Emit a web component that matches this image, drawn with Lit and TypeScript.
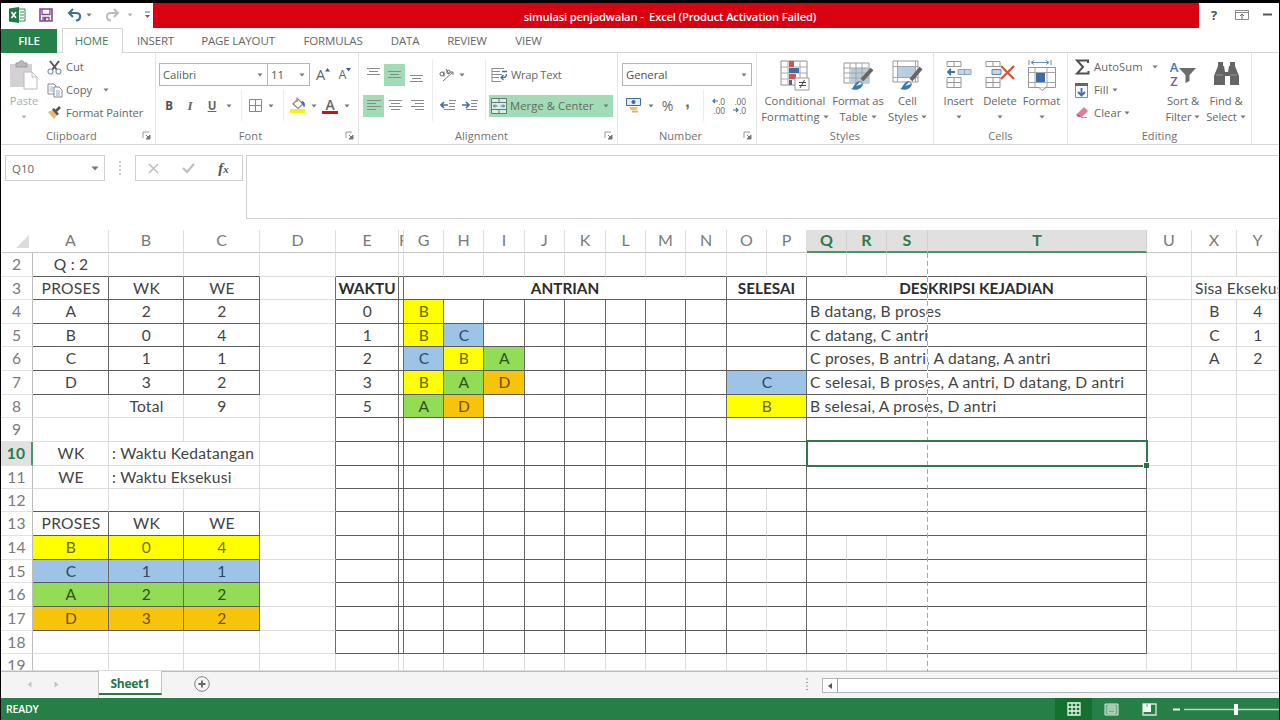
import { LitElement, html, svg, css, nothing } from "lit";
import { customElement } from "lit/decorators.js";
import { classMap } from "lit/directives/class-map.js";
import { styleMap } from "lit/directives/style-map.js";

type Tone = "yellow" | "blue" | "green" | "orange";
interface Cell {
  text?: string;
  span?: number;
  tone?: Tone;
  bold?: boolean;
  left?: boolean;
}

const COLS = ["A", "B", "C", "D", "E", "F", "G", "H", "I", "J", "K", "L", "M", "N", "O", "P", "Q", "R", "S", "T", "U", "X", "Y"];
const COL_WIDTHS = [76, 75, 76, 76, 63, 5, 40, 40, 41, 40, 41, 40, 40, 41, 40, 40, 40, 40, 41, 219, 45, 45, 42];
const ROW_HEIGHTS = [24, 23, 24, 23, 24, 24, 23, 24, 24, 23, 23, 24, 24, 23, 24, 24, 23, 17];
const TONE_OF: Record<string, Tone> = { B: "yellow", C: "blue", A: "green", D: "orange" };

const cells: Record<string, Cell> = {
  A2: { text: "Q : 2" },
  A3: { text: "PROSES" }, B3: { text: "WK" }, C3: { text: "WE" },
  A4: { text: "A" }, B4: { text: "2" }, C4: { text: "2" },
  A5: { text: "B" }, B5: { text: "0" }, C5: { text: "4" },
  A6: { text: "C" }, B6: { text: "1" }, C6: { text: "1" },
  A7: { text: "D" }, B7: { text: "3" }, C7: { text: "2" },
  B8: { text: "Total" }, C8: { text: "9" },
  A10: { text: "WK" }, B10: { text: ": Waktu Kedatangan", span: 2, left: true },
  A11: { text: "WE" }, B11: { text: ": Waktu Eksekusi", span: 2, left: true },
  A13: { text: "PROSES" }, B13: { text: "WK" }, C13: { text: "WE" },
  E3: { text: "WAKTU", bold: true },
  G3: { text: "ANTRIAN", bold: true, span: 8 },
  O3: { text: "SELESAI", bold: true, span: 2 },
  Q3: { text: "DESKRIPSI KEJADIAN", bold: true, span: 4 },
  E4: { text: "0" }, E5: { text: "1" }, E6: { text: "2" }, E7: { text: "3" }, E8: { text: "5" },
  O7: { text: "C", tone: "blue" }, O8: { text: "B", tone: "yellow" },
  Q4: { text: "B datang, B proses" },
  Q5: { text: "C datang, C antri" },
  Q6: { text: "C proses, B antri, A datang, A antri" },
  Q7: { text: "C selesai, B proses, A antri, D datang, D antri" },
  Q8: { text: "B selesai, A proses, D antri" },
  X3: { text: "Sisa Eksekusi", span: 2, left: true },
  X4: { text: "B" }, Y4: { text: "4" },
  X5: { text: "C" }, Y5: { text: "1" },
  X6: { text: "A" }, Y6: { text: "2" },
};
[["B", "0", "4"], ["C", "1", "1"], ["A", "2", "2"], ["D", "3", "2"]].forEach((r, i) =>
  r.forEach((text, c) => (cells["ABC"[c] + (14 + i)] = { text, tone: TONE_OF[r[0]] })));
["B", "BC", "CBA", "BAD", "AD"].forEach((queue, i) =>
  [...queue].forEach((text, c) => (cells["GHI"[c] + (4 + i)] = { text, tone: TONE_OF[text] })));
for (let r = 4; r <= 11; r++) cells["O" + r] = { ...cells["O" + r], span: 2 };
for (let r = 4; r <= 13; r++) cells["Q" + r] = { ...cells["Q" + r], span: 4, left: true };

const between = (v: number, a: number, b: number) => v >= a && v <= b;

@customElement("sheet-grid")
export class SheetGrid extends LitElement {
  static styles = css`
    :host { display: block; font-family: Lato, "Noto Sans", sans-serif; color: #444; }
    .grid { display: grid; height: 441px; overflow: hidden; background: #fff; }
    .corner { display: flex; justify-content: flex-end; align-items: flex-end; padding: 0 4px 4px 0; border-bottom: 1px solid #c6c6c6; }
    .head, .row { display: flex; align-items: center; justify-content: center; box-sizing: border-box; color: #7a7a7a; font-size: 16px; overflow: hidden; }
    .head { border-right: 1px solid #dedede; border-bottom: 1px solid #c6c6c6; padding: 0 0 3px 0; line-height: 19px; }
    .row { border-right: 1px solid #bdbdbd; border-bottom: 1px solid #e2e2e2; letter-spacing: .2px; align-items: flex-start; line-height: 23px; font-size: 15.6px; }
    .head.on { background: #e0e0e0; color: #2c7c4a; font-weight: 700; border-right-color: #cfcfcf; border-bottom: 2px solid #4e9468; padding-bottom: 2px; }
    .row.on { background: #e1e1e1; color: #2c7c4a; font-weight: 700; border-right: 2px solid #4e9468; }
    .head.narrow { justify-content: flex-start; padding-left: 0; }
    .cell { box-sizing: border-box; min-width: 0; overflow: hidden; white-space: nowrap; text-align: center; font-size: 15.6px; line-height: 23px; letter-spacing: .24px; border-right: 1px solid #dcdcdc; border-bottom: 1px solid #dcdcdc; padding-left: 1px; }
    .left { text-align: left; padding-left: 3px; }
    .bold { font-weight: 700; color: #2c2c2c; letter-spacing: 0; font-size: 15.3px; line-height: 22px; padding-left: 0; }
    .dr { border-right-color: #6a6a6a; }
    .db { border-bottom-color: #5c5c5c; }
    .yellow { background: #ff0; color: #6a6a10; }
    .blue { background: #9dc3e6; color: #2f4a63; }
    .green { background: #92dc56; color: #2e5218; }
    .orange { background: #f6c40b; color: #70500c; }
    .pagebreak { grid-row: 2 / -1; grid-column: 20; justify-self: end; width: 1px; background: repeating-linear-gradient(#a8a8a8 0 5px, #fff 5px 8px); }
    .selection { grid-row: 10; grid-column: 18 / 22; box-sizing: border-box; border: 2px solid #33784c; margin: -2px -1px -1px -1px; display: flex; justify-content: flex-end; align-items: flex-end; z-index: 1; }
    .handle { width: 5px; height: 5px; margin: 0 -3px -3px 0; flex: none; background: #2b7145; border: 1px solid #fff; border-right: 0; border-bottom: 0; }
  `;

  private cellsOf(r: number) {
    const out = [];
    for (let c = 0; c < COLS.length; ) {
      const cell = cells[COLS[c] + r] ?? {};
      const span = cell.span ?? 1;
      const last = c + span - 1;
      const tableRows = between(r, 3, 7) || between(r, 13, 17);
      const dr = (last <= 2 && tableRows) || (between(last, 3, 13) && between(r, 3, 18)) || ((last === 15 || last === 19) && between(r, 3, 18));
      const db = (c <= 2 && (between(r, 2, 7) || between(r, 12, 17))) || (between(c, 4, 19) && between(r, 2, 18));
      out.push(html`<div
        class=${classMap({ cell: true, left: !!cell.left, bold: !!cell.bold, dr, db, [cell.tone ?? "plain"]: true })}
        style=${styleMap({ gridRow: String(r), gridColumn: `${c + 2} / span ${span}` })}>${cell.text ?? nothing}</div>`);
      c += span;
    }
    return out;
  }

  render() {
    const tracks = {
      gridTemplateColumns: [32, ...COL_WIDTHS].map((w) => w + "px").join(" "),
      gridTemplateRows: [23, ...ROW_HEIGHTS].map((h) => h + "px").join(" "),
    };
    return html`<div class="grid" style=${styleMap(tracks)}>
      <div class="corner"><svg width="13" height="13"><path d="M13 0V13H0Z" fill="#dcdcdc" /></svg></div>
      ${COLS.map((c, i) => html`<div class=${classMap({ head: true, on: between(i, 16, 19), narrow: c === "F" })}>${c}</div>`)}
      ${ROW_HEIGHTS.map((_, i) => html`<div class=${classMap({ row: true, on: i === 8 })} style=${styleMap({ gridRow: String(i + 2), gridColumn: "1" })}>${i + 2}</div>
        ${this.cellsOf(i + 2)}`)}
      <div class="pagebreak"></div>
      <div class="selection"><span class="handle"></span></div>
    </div>`;
  }
}

const icon = (w: number, h: number, body: unknown) => html`<svg width=${w} height=${h} viewBox="0 0 ${w} ${h}" fill="none">${body}</svg>`;
const caret = icon(6, 4, svg`<path d="M0.500 0.500H5.500L3 3.500Z" fill="#777"/>`);
const paleCaret = icon(6, 4, svg`<path d="M0.500 0.500H5.500L3 3.500Z" fill="#b5b5b5"/>`);
const launcher = icon(9, 9, svg`<path d="M1 7V1H7" stroke="#999"/><path d="M4 4L7 7M8 4V8H4Z" stroke="#777" fill="#777"/>`);
const lines = (rows: number[][]) => svg`${rows.map(([x, y, w]) => svg`<path d="M${x} ${y + 0.5}h${w}" stroke="#8a8a8a"/>`)}`;

const I = {
  excel: icon(17, 16, svg`<path d="M9 2h7v12H9z" fill="#fff" stroke="#3a8a58"/><path d="M11 5h4M11 8h4M11 11h4" stroke="#3a8a58"/><path d="M0 1.500L10 0V16L0 14.500Z" fill="#1f7a43"/><path d="M2.500 5L7 11M7 5L2.500 11" stroke="#fff" stroke-width="1.600"/>`),
  save: icon(14, 14, svg`<path d="M1 1H13V13H1Z" stroke="#80479b" stroke-width="1.600"/><path d="M3 1V6.500H11V1M4 13V9.500H10V13" stroke="#80479b" stroke-width="1.300"/><path d="M5 10h2v3H5z" fill="#80479b"/>`),
  undo: icon(15, 14, svg`<path d="M6 1L2 5L6 9M2 5H9C15 5 14 12 9 12.500" stroke="#3c6ea5" stroke-width="2.100"/>`),
  redo: icon(15, 14, svg`<path d="M9 1L13 5L9 9M13 5H6C0 5 1 12 6 12.500" stroke="#bcbcbc" stroke-width="2"/>`),
  custom: icon(7, 8, svg`<path d="M1 1h5" stroke="#666"/><path d="M1 4h5L3.500 7Z" fill="#666"/>`),
  ribbonOpt: icon(14, 12, svg`<path d="M.500 1.500h13v9H.500zM.500 3.500h13" stroke="#888"/><path d="M7 10V5M5 7L7 5L9 7" stroke="#666"/>`),
  paste: icon(30, 31, svg`<path d="M1 4h22v23H1z" fill="#d5d0d6"/><path d="M7 5V3h3c0-3 5-3 5 0h3v4H7z" fill="#b9b9b9" stroke="#999"/><path d="M15 12h8l5 5v12H15z" fill="#fdfdfd" stroke="#bcbcbc"/><path d="M23 12v5h5" stroke="#bcbcbc"/>`),
  cut: icon(15, 15, svg`<path d="M3 1L10 10M12 1L5 10" stroke="#555" stroke-width="2"/><circle cx="3.500" cy="11.500" r="2.500" stroke="#7e97c0" stroke-width="1.200"/><circle cx="11.500" cy="11.500" r="2.500" stroke="#7e97c0" stroke-width="1.200"/>`),
  copy: icon(16, 15, svg`<path d="M1 1h6l2 2v8H1z" fill="#fff" stroke="#888"/><path d="M2.500 4h4M2.500 6h4M2.500 8h4" stroke="#9bb3cd"/><path d="M7 4h5l3 3v7H7z" fill="#fff" stroke="#888"/><path d="M9 8h4M9 10h4M9 12h4" stroke="#8ba8c7"/>`),
  brush: icon(15, 14, svg`<path d="M1 6l5-2 4 5-3 4z" fill="#e9b96b"/><path d="M5 3.500l2-1.500 5 6-2 1.500z" fill="#555"/><path d="M9 5l4-4" stroke="#555" stroke-width="2.600"/>`),
  borders: icon(14, 13, svg`<path d="M1.500 .500h12v12h-12zM7.500 .500v12M1.500 6.500h12" stroke="#888"/>`),
  bucket: icon(18, 17, svg`<path d="M1 12h15v4H1z" fill="#f7f01a"/><path d="M4 7l5-5 5 5-5 4.500zM8 5V0.500" stroke="#888" stroke-width="1.200" fill="#fff"/><path d="M13 4c4 1 3 5 2 7-1-3-1-4-3-5z" fill="#3d6da5"/>`),
  top: icon(15, 14, lines([[1, 0, 13], [3, 3, 9], [1, 6, 13]])),
  mid: icon(15, 14, lines([[1, 3, 13], [3, 6, 9], [1, 9, 13]])),
  bot: icon(15, 14, lines([[1, 7, 13], [3, 10, 9], [1, 13, 13]])),
  al: icon(15, 13, lines([[1, 1, 14], [1, 4, 9], [1, 7, 14], [1, 10, 9]])),
  ac: icon(15, 13, lines([[1, 1, 13], [3, 4, 9], [1, 7, 13], [3, 10, 9]])),
  ar: icon(15, 13, lines([[1, 1, 13], [5, 4, 9], [1, 7, 13], [5, 10, 9]])),
  orient: icon(17, 16, svg`<circle cx="4" cy="7" r="2" stroke="#666"/><path d="M6 4.500v5M8 2l3 5" stroke="#666"/><circle cx="10.500" cy="5" r="1.700" stroke="#666"/><path d="M5 14L15 5M12 5h3v3" stroke="#777"/>`),
  outdent: icon(17, 13, svg`${lines([[9, 1, 7], [9, 4, 6], [9, 7, 6], [4, 10, 11]])}<path d="M8 6H1M4 3L1 6L4 9" stroke="#3e6fa8" stroke-width="1.600"/>`),
  indent: icon(17, 13, svg`${lines([[9, 1, 7], [9, 4, 6], [9, 7, 6], [4, 10, 11]])}<path d="M0 6H7M4 3L7 6L4 9" stroke="#3e6fa8" stroke-width="1.600"/>`),
  wrap: icon(17, 16, svg`<path d="M1 1.500h12M1 4.500h8M1 7.500h10M1 10.500h7M1 14.500h9M1 1v14" stroke="#8c8c8c"/><path d="M11 4.500h5M15.500 7c0 3-1 3.500-5 3.500M12.500 8L10 10.500L12.500 13" stroke="#3e6fa8" stroke-width="1.300"/>`),
  merge: icon(16, 16, svg`<path d="M.500 .500h15v15H.500zM.500 4.500h15M.500 11.500h15M8 .500v4M8 11.500v4" stroke="#5f7f70" fill="#d8efe1"/><path d="M2.500 8h4M13.500 8h-4M4 6.500L2.500 8L4 9.500M12 6.500L13.500 8L12 9.500" stroke="#3e6fa8"/>`),
  money: icon(17, 17, svg`<path d="M1.500 1.500h14v7h-14z" fill="#e6edf5" stroke="#41689a"/><circle cx="8.500" cy="5" r="2" fill="#41689a"/><path d="M4 10h9l-2 3H6z" fill="#e9bf7c"/><path d="M7 14.500h6" stroke="#e4b363" stroke-width="2"/>`),
  decArrowL: icon(6, 6, svg`<path d="M6 3H1M3 1L1 3L3 5" stroke="#3e6fa8" stroke-width="1.200"/>`),
  decArrowR: icon(6, 6, svg`<path d="M0 3H5M3 1L5 3L3 5" stroke="#3e6fa8" stroke-width="1.200"/>`),
  cf: icon(30, 31, svg`<path d="M1 1h26v24H1z" fill="#fff" stroke="#909090"/><path d="M1 7h26M1 13h26M1 19h26M8 1v24M20 1v24" stroke="#aaa"/><path d="M9 1h5v6H9zM9 14h7v5H9z" fill="#cf5353"/><path d="M9 8h10v5H9zM9 20h3v5H9z" fill="#3e6da4"/><path d="M15 18h14v12H15z" fill="#fff" stroke="#999"/><path d="M19 22.500h7M19 25.500h7M24.500 20L20 28" stroke="#444"/>`),
  fat: icon(31, 31, svg`<path d="M1 3h25v20H1z" fill="#fff" stroke="#999"/><path d="M8 8h18v15H8z" fill="#b9cde2"/><path d="M1 8h25M1 13h25M1 18h25M7 3v20M13 3v20M19 3v20" stroke="#a5a5a5"/><path d="M29 9L19 20" stroke="#666" stroke-width="4"/><path d="M8 29c3-1 3-7 9-8l3 3c-1 5-7 7-12 5z" fill="#3f78b0"/><path d="M13 26l4-4 2 2z" fill="#fff"/>`),
  cs: icon(31, 31, svg`<path d="M1 1h25v21H1z" fill="#fff" stroke="#999"/><path d="M6 7h17v10H6z" fill="#b9cde2"/><path d="M1 6.500h25M1 17.500h25M5.500 1v21M23.500 1v21" stroke="#a5a5a5"/><path d="M29 8L19 20" stroke="#666" stroke-width="4"/><path d="M8 29c3-1 3-7 9-8l3 3c-1 5-7 7-12 5z" fill="#3f78b0"/><path d="M13 26l4-4 2 2z" fill="#fff"/>`),
  insert: icon(28, 30, svg`<path d="M2 1.500h14v5H2zM9 1.500v5M2 17.500h14v10H2zM9 17.500v10M2 22.500h14" stroke="#969696"/><path d="M13 9.500h13v5H13zM19.500 9.500v5" fill="#c3d5e8" stroke="#8aa5c2"/><path d="M10 12H3M6 9L3 12L6 15" stroke="#3e6fa8" stroke-width="1.800"/>`),
  del: icon(32, 30, svg`<path d="M2 1.500h14v5H2zM9 1.500v5M2 17.500h14v10H2zM9 17.500v10M2 22.500h14" stroke="#969696"/><path d="M8 9.500h9v5H8z" fill="#c3d5e8" stroke="#5b84b3"/><path d="M17 6L30 19M30 6L17 19" stroke="#d2593f" stroke-width="2.400"/>`),
  format: icon(30, 31, svg`<path d="M1.500 7.500h27v20h-27z" fill="#fff" stroke="#969696"/><path d="M1.500 12.500h27M1.500 22.500h27M8 7.500v20M20 7.500v20" stroke="#a5a5a5"/><path d="M9 13h9v9H9z" fill="#3c6ca6"/><path d="M2 0v5M24 0v5M4 2.500h18M7 .500L4 2.500L7 4.500M19 .500L22 2.500L19 4.500" stroke="#6b8cb5"/><path d="M4 27.500h8l3 3 4-3" fill="#fff" stroke="#969696"/>`),
  sum: icon(15, 16, svg`<path d="M13 4V1.500H2L8 8L2 14.500H13.500V12" stroke="#505050" stroke-width="2"/>`),
  fill: icon(13, 15, svg`<path d="M.500 .500h12v14H.500z" fill="#f4f8fc" stroke="#8a8a8a"/><path d="M0 0h13v3H0z" fill="#666"/><path d="M6.500 5v7M3 9L6.500 12.500L10 9" stroke="#3d6da8" stroke-width="1.800"/>`),
  clear: icon(14, 13, svg`<path d="M3 7L9 1L13 5L7 11Z" fill="#e37c98"/><path d="M1 9L3 7L7 11H3Z" fill="#d85d80"/><path d="M6 11.500h6" stroke="#aaa"/>`),
  funnel: icon(17, 15, svg`<path d="M0 0h17L10.500 7v6l-4 2V7z" fill="#6b6b6b"/>`),
  binocular: icon(27, 26, svg`<path d="M5 2h5v4h1l1 6h3l1-6h1V2h5v4l4 10v9h-9v-9h-5v9H1v-9l4-10z" fill="#656565"/><path d="M3 15h7M17 15h7" stroke="#999"/>`),
};

@customElement("excel-ribbon")
export class ExcelRibbon extends LitElement {
  static styles = css`
    :host { display: block; font: 11.2px/16px "Open Sans", "Noto Sans", sans-serif; color: #666; letter-spacing: -.05px; }
    svg { display: block; flex: none; }
    .ribbon { display: flex; height: 92px; box-sizing: border-box; border-bottom: 1px solid #d6d6d6; background: #fff; }
    .group { display: grid; grid-template-rows: 73px 18px; box-sizing: border-box; border-right: 1px solid #e4e4e4; flex: none; }
    .clipboard { width: 155px; } .font { width: 203px; } .alignment { width: 259px; } .number { width: 139px; }
    .styles { width: 177px; } .cells { width: 134px; } .editing { width: 184px; }
    .foot { display: grid; grid-template-columns: 1fr; align-items: center; text-align: center; font-size: 11px; height: 18px; color: #707070; letter-spacing: .1px; padding-top: 1px; box-sizing: border-box; }
    .foot.launch { grid-template-columns: 1fr 13px; }
    .body { display: flex; white-space: nowrap; }
    .stack { display: flex; flex-direction: column; }
    .line { display: grid; height: 31px; align-items: center; justify-items: center; }
    .rows { padding: 6px 0 0 3px; }
    .numrows { padding-left: 4px; } .alrows { padding-left: 4px; }
    .f1 { grid-template-columns: 109px 42px 26px 18px; }
    .f2 { grid-template-columns: 20px 22px 22px 12px 12px 15px 18px 6px 23px 10px 22px 12px; }
    .a1 { grid-template-columns: 21px 21px 23px 8px 20px 12px 15px 4px 2px 124px; }
    .a2 { grid-template-columns: 21px 23px 21px 8px 24px 21px 2px 4px 2px 124px; }
    .n1 { grid-template-columns: 130px; }
    .n2 { grid-template-columns: 23px 11px 23px 17px 14px 17px 25px; }
    .sep { width: 1px; height: 31px; background: #ededed; }
    .combo { box-sizing: border-box; width: 100%; height: 23px; border: 1px solid #b5b5b5; display: flex; align-items: center; justify-content: space-between; padding: 1px 4px 0 3px; font-size: 11.3px; color: #505050; }
    .size { border-left: 0; }
    .green { color: #3f6b4e; }
    .hl { width: 21px; height: 22px; background: #a1dcb7; display: grid; place-items: center; }
    .wide { width: 100%; box-sizing: border-box; height: 22px; display: flex; align-items: center; gap: 3px; padding: 0 4px 0 2px; }
    .wide.wrap { letter-spacing: -.3px; }
    .wide.onn { background: #a1dcb7; letter-spacing: .1px; }
    .push { margin-left: auto; }
    .b { font-weight: 700; color: #505050; font-size: 11.5px; } .i { font-family: "Liberation Serif", serif; font-style: italic; font-weight: 700; font-size: 13px; } .u { font-weight: 700; font-size: 11.5px; text-decoration: underline; }
    .bigA { font-size: 14.5px; } .smallA { font-size: 12.5px; }
    .grow { display: flex; align-items: flex-start; } .grow svg { margin-top: 1px; }
    .fontcolor { display: flex; flex-direction: column; align-items: center; line-height: 13px; font-size: 14px; font-weight: 600; }
    .swatch { width: 16px; height: 3px; background: #d40f18; }
    .pct { font-size: 14px; } .comma { font: 700 16px/16px "Liberation Sans", sans-serif; padding-bottom: 8px; }
    .dec { display: grid; justify-items: end; font-size: 8.5px; letter-spacing: -.2px; }
    .dec span { display: flex; align-items: center; line-height: 9px; height: 9px; overflow: hidden; }
    .big { display: flex; flex-direction: column; align-items: center; text-align: center; padding-top: 7px; flex: none; }
    .pic { height: 33px; flex: none; display: flex; align-items: flex-start; justify-content: center; }
    .cap { display: flex; align-items: center; gap: 3px; height: 16px; flex: none; }
    .dim { color: #ababab; }
    .w45 { width: 46px; } .cfw { width: 76px; } .fatw { width: 50px; } .csw { width: 49px; } .inw { width: 41px; } .dew { width: 42px; } .fow { width: 41px; } .sow { width: 42px; } .fiw { width: 44px; }
    .cellsbody { padding-left: 4px; } .wide0 { letter-spacing: .12px; }
    .tools { display: flex; flex-direction: column; padding-top: 3px; }
    .tool { display: flex; align-items: center; height: 22.7px; flex: none; }
    .slot { width: 19px; flex: none; display: flex; justify-content: flex-start; }
    .copygap { width: 11px; } .sumgap { width: 9px; } .gaps { width: 3px; }
    .edit { width: 94px; padding-left: 7px; box-sizing: border-box; } .edit .tool { letter-spacing: .1px; }
    .sort { display: flex; align-items: flex-start; } .az { display: flex; flex-direction: column; font-size: 13px; line-height: 14px; color: #3f74ad; font-weight: 600; } .az span { height: 14px; } .z { color: #8a4fa3; } .sort svg { margin: 8px 0 0 1px; }
  `;

  private group(name: string, cls: string, body: unknown, launch = true) {
    return html`<section class="group ${cls}"><div class="body">${body}</div>
      <div class=${classMap({ foot: true, launch })}><span>${name}</span>${launch ? launcher : nothing}</div></section>`;
  }
  private big(cls: string, pic: unknown, l1: string, l2 = "", mark = caret) {
    return html`<div class="big ${cls}"><div class="pic">${pic}</div><div class="cap">${l1}</div><div class="cap">${l2 ? html`<span>${l2}</span>` : nothing}${mark}</div></div>`;
  }

  render() {
    const sep = html`<span class="sep"></span>`;
    return html`<div class="ribbon">
      ${this.group("Clipboard", "clipboard", html`
        ${this.big("w45 dim", I.paste, "Paste", "", paleCaret)}
        <div class="tools">
          <div class="tool"><span class="slot">${I.cut}</span>Cut</div>
          <div class="tool"><span class="slot">${I.copy}</span>Copy<span class="copygap"></span>${caret}</div>
          <div class="tool"><span class="slot">${I.brush}</span>Format Painter</div>
        </div>`)}
      ${this.group("Font", "font", html`<div class="stack rows">
        <div class="line f1"><div class="combo green">Calibri${caret}</div><div class="combo size">11${caret}</div>
          <span class="grow bigA">A${icon(5, 4, svg`<path d="M0 3.500L2.500 0L5 3.500z" fill="#3e5f8a"/>`)}</span><span class="grow smallA">A${icon(5, 4, svg`<path d="M0 0L2.500 3.500L5 0z" fill="#3e5f8a"/>`)}</span></div>
        <div class="line f2"><span class="b">B</span><span class="i">I</span><span class="u">U</span>${caret}${sep}${I.borders}${caret}${sep}${I.bucket}${caret}
          <span class="fontcolor">A<span class="swatch"></span></span>${caret}</div></div>`)}
      ${this.group("Alignment", "alignment", html`<div class="stack rows alrows">
        <div class="line a1">${I.top}<span class="hl">${I.mid}</span>${I.bot}${sep}${I.orient}${caret}<span></span>${sep}<span></span><span class="wide wrap">${I.wrap}Wrap Text</span></div>
        <div class="line a2"><span class="hl">${I.al}</span>${I.ac}${I.ar}${sep}${I.outdent}${I.indent}<span></span>${sep}<span></span><span class="wide onn">${I.merge}Merge &amp; Center<span class="push">${caret}</span></span></div></div>`)}
      ${this.group("Number", "number", html`<div class="stack rows numrows">
        <div class="line n1"><div class="combo">General${caret}</div></div>
        <div class="line n2">${I.money}${caret}<span class="pct">%</span><span class="comma">,</span>${sep}
          <span class="dec"><span>${I.decArrowL}.0</span><span>.00</span></span><span class="dec"><span>.00</span><span>${I.decArrowR}.0</span></span></div></div>`)}
      ${this.group("Styles", "styles", html`
        ${this.big("cfw wide0", I.cf, "Conditional", "Formatting")}
        ${this.big("fatw", I.fat, "Format as", "Table")}
        ${this.big("csw", I.cs, "Cell", "Styles")}`, false)}
      ${this.group("Cells", "cells", html`<div class="body cellsbody">
        ${this.big("inw", I.insert, "Insert")}${this.big("dew", I.del, "Delete")}${this.big("fow", I.format, "Format")}</div>`, false)}
      ${this.group("Editing", "editing", html`
        <div class="tools edit">
          <div class="tool"><span class="slot">${I.sum}</span>AutoSum<span class="sumgap"></span>${caret}</div>
          <div class="tool"><span class="slot">${I.fill}</span>Fill<span class="gaps"></span>${caret}</div>
          <div class="tool"><span class="slot">${I.clear}</span>Clear<span class="gaps"></span>${caret}</div>
        </div>
        ${this.big("sow", html`<span class="sort"><span class="az"><span>A</span><span class="z">Z</span></span>${I.funnel}</span>`, "Sort &", "Filter")}
        ${this.big("fiw", I.binocular, "Find &", "Select")}`, false)}
    </div>`;
  }
}

@customElement("app-root")
export class AppRoot extends LitElement {
  static styles = css`
    :host { display: block; width: 1280px; height: 720px; overflow: hidden; background: #000; font-family: "Open Sans", "Noto Sans", sans-serif; }
    svg { display: block; flex: none; }
    .window { margin: 3px 1px 0 1px; height: 717px; background: #fff; display: flex; flex-direction: column; overflow: hidden; }
    .title { display: flex; height: 25px; flex: none; }
    .quick { width: 152px; box-sizing: border-box; display: grid; grid-template-columns: 30px 28px 19px 19px 22px 17px 8px; align-items: center; justify-items: start; padding: 0 0 1px 8px; }
    .red { width: 1046px; background: #d9000f; color: #fff; display: flex; align-items: center; justify-content: center; font-size: 11.2px; font-weight: 600; white-space: pre; padding: 1px 12px 0 0; box-sizing: border-box; letter-spacing: -.16px; }
    .controls { flex: 1; display: grid; grid-template-columns: 30px 26px 24px; justify-items: center; align-items: center; color: #555; font-weight: 700; font-size: 13px; padding-bottom: 2px; }
    .tabs { display: flex; height: 25px; flex: none; border-bottom: 1px solid #d6d6d6; box-sizing: border-box; font-size: 11.5px; color: #666; line-height: 26px; white-space: nowrap; letter-spacing: -.15px; }
    .tab { text-align: center; flex: none; }
    .file { width: 56px; background: #25804a; color: #fff; font-weight: 600; margin-right: 5px; height: 24px; margin-top: 1px; line-height: 24px; }
    .home { width: 61px; box-sizing: border-box; color: #3f8259; border: 1px solid #d6d6d6; border-bottom: 0; background: #fff; height: 25px; line-height: 24px; padding-right: 2px; }
    .t3 { width: 65px; } .t4 { width: 100px; } .t5 { width: 90px; } .t6 { width: 54px; } .t7 { width: 70px; } .t8 { width: 53px; }
    .formula { display: flex; flex: none; height: 85px; box-sizing: border-box; padding: 10px 0 0 4px; align-items: flex-start; }
    .name { width: 100px; height: 26px; box-sizing: border-box; border: 1px solid #d0d0d0; display: flex; align-items: center; justify-content: space-between; padding: 0 5px 0 6px; font-size: 11.5px; color: #666; }
    .dots { width: 30px; height: 26px; display: grid; place-items: center; }
    .fx { width: 108px; height: 26px; box-sizing: border-box; border: 1px solid #d0d0d0; display: grid; grid-template-columns: repeat(3, 35px); place-items: center; }
    .fxt { font: italic 700 15px "Liberation Serif", serif; color: #555; } .sub { font-size: 11px; }
    .entry { flex: 1; margin-left: 3px; height: 64px; box-sizing: border-box; border: 1px solid #d0d0d0; border-right: 0; }
    .sheetbar { display: flex; height: 27px; flex: none; background: #f4f4f4; border-top: 1px solid #bcbcbc; box-sizing: border-box; }
    .nav { width: 98px; box-sizing: border-box; display: flex; gap: 22px; padding: 9px 0 0 26px; border-right: 1px solid #c4c4c4; }
    .sheet { width: 63px; height: 24px; box-sizing: border-box; margin-top: -1px; background: #fff; border-bottom: 2px solid #2b7b49; border-right: 1px solid #c4c4c4; color: #26764a; font-size: 12px; font-weight: 700; text-align: center; line-height: 25px; letter-spacing: -.3px; }
    .add { margin: 4px 0 0 32px; }
    .scroll { margin-left: auto; display: flex; padding-top: 6px; gap: 14px; }
    .track { display: flex; width: 457px; height: 15px; box-sizing: border-box; border: 1px solid #b5b5b5; border-right: 0; background: #fff; }
    .prev { width: 14px; border-right: 1px solid #a0a0a0; display: grid; place-items: center; }
    .status { display: flex; flex: 1; background: #267f46; color: #fff; font-size: 10.5px; font-weight: 600; line-height: 22px; padding-left: 5px; letter-spacing: -.2px; }
    .views { margin-left: auto; display: grid; grid-template-columns: 37px 38px 38px 16px 95px; place-items: center; }
    .active { background: #14702f; width: 37px; height: 22px; display: grid; place-items: center; }
  `;

  render() {
    const dots = icon(2, 14, svg`<path d="M0 1h2M0 5h2M0 9h2M0 13h2" stroke="#999"/>`);
    const tabs = ["INSERT", "PAGE LAYOUT", "FORMULAS", "DATA", "REVIEW", "VIEW"];
    return html`<div class="window">
      <header class="title">
        <div class="quick">${I.excel}${I.save}${I.undo}${caret}${I.redo}${paleCaret}${I.custom}</div>
        <div class="red">simulasi penjadwalan -  Excel (Product Activation Failed)</div>
        <div class="controls"><span>?</span>${I.ribbonOpt}${icon(9, 3, svg`<path d="M0 1.500h9" stroke="#555" stroke-width="2"/>`)}</div>
      </header>
      <nav class="tabs"><span class="tab file">FILE</span><span class="tab home">HOME</span>${tabs.map((t, i) => html`<span class="tab t${i + 3}">${t}</span>`)}</nav>
      <excel-ribbon></excel-ribbon>
      <div class="formula">
        <div class="name">Q10${icon(8, 5, svg`<path d="M.500 .500H7.500L4 4.500Z" fill="#777"/>`)}</div>
        <div class="dots">${dots}</div>
        <div class="fx">${icon(11, 11, svg`<path d="M1 1L10 10M10 1L1 10" stroke="#bdbdbd" stroke-width="1.500"/>`)}
          ${icon(13, 11, svg`<path d="M1 5L5 9L12 1" stroke="#bdbdbd" stroke-width="2"/>`)}<span class="fxt">f<span class="sub">x</span></span></div>
        <div class="entry"></div>
      </div>
      <sheet-grid></sheet-grid>
      <div class="sheetbar">
        <div class="nav">${icon(5, 7, svg`<path d="M4.500 .500L.500 3.500L4.500 6.500z" fill="#c2c2c2"/>`)}${icon(5, 7, svg`<path d="M.500 .500L4.500 3.500L.500 6.500z" fill="#c2c2c2"/>`)}</div>
        <div class="sheet">Sheet1</div>
        <div class="add">${icon(16, 16, svg`<circle cx="8" cy="8" r="7.300" stroke="#808080"/><path d="M8 4.500v7M4.500 8h7" stroke="#666" stroke-width="1.800"/>`)}</div>
        <div class="scroll">${icon(2, 14, svg`<path d="M0 1h2M0 4.500h2M0 8h2M0 11.500h2" stroke="#999"/>`)}<div class="track"><div class="prev">${icon(4, 6, svg`<path d="M4 0L0 3L4 6z" fill="#555"/>`)}</div></div></div>
      </div>
      <footer class="status">READY<div class="views">
        <span class="active">${icon(14, 14, svg`<path d="M1 1h12v12H1zM5 1v12M9 1v12M1 5h12M1 9h12" stroke="#e8f5ec" stroke-width="1.300"/>`)}</span>
        ${icon(15, 13, svg`<path d="M1 1h13v11H1z" fill="#72ab85" stroke="#d8ebde"/><path d="M4 3h7v7H4zM5 5h5M5 7h5" stroke="#d8ebde"/>`)}
        ${icon(15, 13, svg`<path d="M1 1h13v11H1z" stroke="#d8ebde" stroke-width="1.300"/><path d="M1 1h8v8H1z" fill="#f4faf6"/><path d="M5 1v3" stroke="#72ab85"/>`)}
        ${icon(7, 3, svg`<path d="M0 1.500h7" stroke="#fff" stroke-width="2"/>`)}
        ${icon(95, 12, svg`<path d="M0 6.500h95" stroke="#b9dbc5" stroke-width="1.300"/><path d="M50 1h4v11h-4z" fill="#fff"/>`)}
      </div></footer>
    </div>`;
  }
}
